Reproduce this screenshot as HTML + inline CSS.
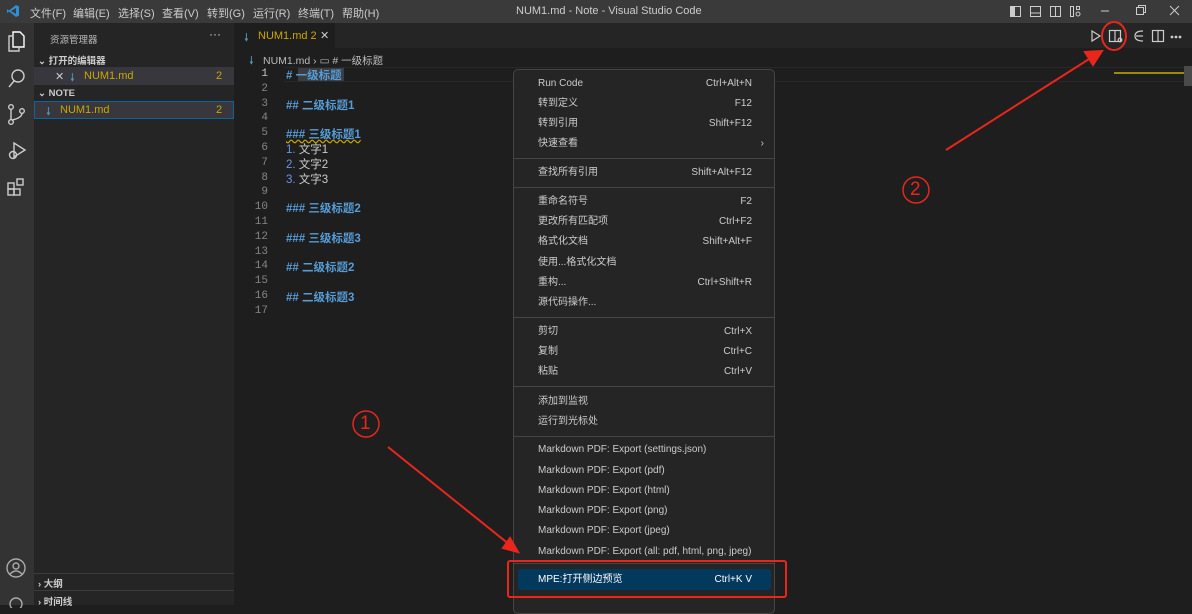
<!DOCTYPE html>
<html><head><meta charset="utf-8"><style>
*{margin:0;padding:0;box-sizing:border-box}
body{width:1192px;height:605px;overflow:hidden;background:#1e1e1e;font-family:"Liberation Sans","Noto Sans CJK SC",sans-serif;font-size:11px;color:#ccc;position:relative}
.a{position:absolute;white-space:nowrap}
#title{left:0;top:0;width:1192px;height:23px;background:#3a3a3a}
#title span.m{position:absolute;top:5px;font-size:11px;color:#ccc}
#act{left:0;top:23px;width:34px;height:582px;background:#333}
#side{left:34px;top:23px;width:200px;height:582px;background:#252526}
#tabs{left:234px;top:23px;width:958px;height:25px;background:#252526}
.ln{position:absolute;left:234px;width:34px;text-align:right;color:#858585;font-family:"Liberation Mono",monospace;font-size:11px}
.code{position:absolute;left:286px;color:#569cd6;font-weight:bold;font-size:11.5px;white-space:nowrap}
#menu{left:513px;top:69px;width:262px;height:545px;background:#252526;border:1px solid #454545;border-radius:5px}
.mi{position:absolute;left:538px;width:214px;font-size:10px;line-height:14px;height:14px;color:#ccc;white-space:nowrap}
.mi i{font-style:normal;position:absolute;right:0;top:0;line-height:14px}
.sep{position:absolute;left:514px;width:260px;height:1px;background:#454545}
</style></head><body>
<div id="title" class="a">
<svg class="a" style="left:6px;top:4px" width="14" height="14" viewBox="0 0 14 14"><path d="M10 1 L13 2.5 V11.5 L10 13 L3 7.5 L1 9 V5 L3 6.5 Z" fill="#2d8fd5"/><path d="M10 4 V10 L5 7 Z" fill="#3a3a3a"/></svg>
<span class="m" style="left:30px">文件(F)</span><span class="m" style="left:73px">编辑(E)</span><span class="m" style="left:118px">选择(S)</span><span class="m" style="left:162px">查看(V)</span><span class="m" style="left:207px">转到(G)</span><span class="m" style="left:253px">运行(R)</span><span class="m" style="left:298px">终端(T)</span><span class="m" style="left:342px">帮助(H)</span>
<span class="m" style="left:516px">NUM1.md - Note - Visual Studio Code</span>
<svg class="a" style="left:1009px;top:5px" width="80" height="13" viewBox="0 0 80 13" fill="none" stroke="#ccc"><rect x="1.5" y="1.5" width="10" height="10"/><rect x="1.5" y="1.5" width="4" height="10" fill="#ccc"/><rect x="21.5" y="1.5" width="10" height="10"/><line x1="21.5" y1="8" x2="31.5" y2="8"/><rect x="41.5" y="1.5" width="10" height="10"/><line x1="46.5" y1="1.5" x2="46.5" y2="11.5"/><rect x="61.5" y="1.5" width="3" height="10"/><rect x="67.5" y="1.5" width="3" height="3"/><circle cx="69" cy="9" r="2"/></svg>
<svg class="a" style="left:1100px;top:4px" width="90" height="14" fill="none" stroke="#ccc"><line x1="1" y1="7" x2="9" y2="7"/><rect x="36.5" y="3.5" width="7" height="7"/><path d="M38.5 3.5V1.5H45.5V8.5H43.5"/><path d="M70 2L79 11M79 2L70 11"/></svg>
</div>
<div id="act" class="a">
<svg class="a" style="left:6px;top:8px" width="22" height="180" fill="none" stroke="#ccc" stroke-width="1.4"><path d="M6 5H3V20H13V17"/><path d="M7 1H14L18 5V16H7Z" stroke="#fff"/><circle cx="12" cy="45" r="6"/><line x1="8" y1="50" x2="3" y2="56"/><circle cx="5" cy="76" r="2.3"/><circle cx="5" cy="91" r="2.3"/><circle cx="16" cy="80" r="2.3"/><path d="M5 78V89M16 82Q16 87 6 89"/><path d="M8 112L19 119L8 126Z"/><circle cx="7" cy="124" r="3.5"/><rect x="2" y="152" width="6" height="6"/><rect x="2" y="158" width="6" height="6"/><rect x="8" y="158" width="6" height="6"/><rect x="11" y="148" width="6" height="6"/></svg>
<svg class="a" style="left:5px;top:535px" width="24" height="50" fill="none" stroke="#aaa" stroke-width="1.4"><circle cx="11" cy="10" r="9"/><circle cx="11" cy="8" r="3"/><path d="M5 16Q11 10 17 16"/><circle cx="11" cy="46" r="6"/></svg>
</div>
<div id="side" class="a">
<span class="a" style="left:16px;top:9px;font-size:9.5px;color:#bbb">资源管理器</span>
<span class="a" style="left:175px;top:4px;font-size:12px;color:#ccc">···</span>
<span class="a" style="left:4px;top:30px;font-size:9.5px;font-weight:bold;color:#ccc">⌄ 打开的编辑器</span>
<div class="a" style="left:0;top:44px;width:200px;height:18px;background:#37373d"></div>
<span class="a" style="left:21px;top:47px;color:#ccc">✕</span>
<span class="a" style="left:36px;top:46px;color:#519aba">🠗</span>
<span class="a" style="left:50px;top:47px;color:#cca700">NUM1.md</span>
<span class="a" style="left:182px;top:47px;color:#cca700">2</span>
<span class="a" style="left:4px;top:65px;font-size:9.5px;font-weight:bold;color:#ccc">⌄ NOTE</span>
<div class="a" style="left:0;top:78px;width:200px;height:18px;background:#37373d;border:1px solid #0e639c"></div>
<span class="a" style="left:12px;top:80px;color:#519aba">🠗</span>
<span class="a" style="left:26px;top:81px;color:#cca700">NUM1.md</span>
<span class="a" style="left:182px;top:81px;color:#cca700">2</span>
<div class="a" style="left:0;top:550px;width:200px;height:1px;background:#3c3c3c"></div>
<span class="a" style="left:4px;top:553px;font-size:9.5px;font-weight:bold;color:#ccc">› 大纲</span>
<div class="a" style="left:0;top:567px;width:200px;height:1px;background:#3c3c3c"></div>
<span class="a" style="left:4px;top:571px;font-size:9.5px;font-weight:bold;color:#ccc">› 时间线</span>
</div>
<div id="tabs" class="a">
<div class="a" style="left:0;top:0;width:101px;height:25px;background:#1e1e1e"></div>
<span class="a" style="left:10px;top:6px;color:#519aba">🠗</span>
<span class="a" style="left:24px;top:7px;color:#cca700">NUM1.md 2</span>
<span class="a" style="left:86px;top:6px;color:#ccc">✕</span>
<svg class="a" style="left:856px;top:6px" width="100" height="14" fill="none" stroke="#ccc" stroke-width="1.2"><path d="M2 2L10 7L2 12Z"/><rect x="19.5" y="1.5" width="11" height="11"/><line x1="25" y1="1.5" x2="25" y2="12.5"/><circle cx="30" cy="11" r="1.8"/><path d="M46 7H53M53 2Q45 2 45 7Q45 12 53 12"/><rect x="62.5" y="1.5" width="11" height="11"/><line x1="68" y1="1.5" x2="68" y2="12.5"/><circle cx="82" cy="8" r=".8" fill="#ccc"/><circle cx="86" cy="8" r=".8" fill="#ccc"/><circle cx="90" cy="8" r=".8" fill="#ccc"/></svg>
</div>
<span class="a" style="left:249px;top:52px;color:#519aba">🠗</span>
<span class="a" style="left:263px;top:53px;color:#bbb;font-size:10.5px">NUM1.md › ▭ # 一级标题</span>
<div class="a" style="left:284px;top:67px;width:908px;height:15px;border-top:1px solid #282828;border-bottom:1px solid #282828"></div>
<div class="a" style="left:298px;top:68px;width:46px;height:13px;background:#3a3d41"></div>
<div class="a" style="left:1114px;top:72px;width:70px;height:2px;background:#a08a00"></div>
<div class="a" style="left:1184px;top:66px;width:8px;height:20px;background:#4a4a4a"></div>
<div class="ln" style="top:68px;color:#c6c6c6">1</div><div class="ln" style="top:83px">2</div><div class="ln" style="top:98px">3</div><div class="ln" style="top:112px">4</div><div class="ln" style="top:127px">5</div><div class="ln" style="top:142px">6</div><div class="ln" style="top:157px">7</div><div class="ln" style="top:172px">8</div><div class="ln" style="top:186px">9</div><div class="ln" style="top:201px">10</div><div class="ln" style="top:216px">11</div><div class="ln" style="top:231px">12</div><div class="ln" style="top:246px">13</div><div class="ln" style="top:260px">14</div><div class="ln" style="top:275px">15</div><div class="ln" style="top:290px">16</div><div class="ln" style="top:305px">17</div>
<div class="code" style="top:67px"># 一级标题</div>
<div class="code" style="top:97px">## 二级标题1</div>
<div class="code" style="top:126px;text-decoration:underline wavy #cca700">### 三级标题1</div>
<div class="code" style="top:141px;font-weight:normal"><span style="color:#6796e6">1.</span> <span style="color:#ccc">文字1</span></div>
<div class="code" style="top:156px;font-weight:normal"><span style="color:#6796e6">2.</span> <span style="color:#ccc">文字2</span></div>
<div class="code" style="top:171px;font-weight:normal"><span style="color:#6796e6">3.</span> <span style="color:#ccc">文字3</span></div>
<div class="code" style="top:200px">### 三级标题2</div>
<div class="code" style="top:230px">### 三级标题3</div>
<div class="code" style="top:259px">## 二级标题2</div>
<div class="code" style="top:289px">## 二级标题3</div>
<div id="menu" class="a"></div>
<div class="mi" style="top:77px">Run Code<i>Ctrl+Alt+N</i></div>
<div class="mi" style="top:97px">转到定义<i>F12</i></div>
<div class="mi" style="top:117px">转到引用<i>Shift+F12</i></div>
<div class="mi" style="top:137px">快速查看<i style="right:-12px">›</i></div>
<div class="sep" style="top:158px"></div>
<div class="mi" style="top:166px">查找所有引用<i>Shift+Alt+F12</i></div>
<div class="sep" style="top:187px"></div>
<div class="mi" style="top:195px">重命名符号<i>F2</i></div>
<div class="mi" style="top:215px">更改所有匹配项<i>Ctrl+F2</i></div>
<div class="mi" style="top:235px">格式化文档<i>Shift+Alt+F</i></div>
<div class="mi" style="top:256px">使用...格式化文档</div>
<div class="mi" style="top:276px">重构...<i>Ctrl+Shift+R</i></div>
<div class="mi" style="top:296px">源代码操作...</div>
<div class="sep" style="top:317px"></div>
<div class="mi" style="top:325px">剪切<i>Ctrl+X</i></div>
<div class="mi" style="top:345px">复制<i>Ctrl+C</i></div>
<div class="mi" style="top:365px">粘贴<i>Ctrl+V</i></div>
<div class="sep" style="top:386px"></div>
<div class="mi" style="top:395px">添加到监视</div>
<div class="mi" style="top:415px">运行到光标处</div>
<div class="sep" style="top:436px"></div>
<div class="mi" style="top:443px">Markdown PDF: Export (settings.json)</div>
<div class="mi" style="top:464px">Markdown PDF: Export (pdf)</div>
<div class="mi" style="top:484px">Markdown PDF: Export (html)</div>
<div class="mi" style="top:504px">Markdown PDF: Export (png)</div>
<div class="mi" style="top:524px">Markdown PDF: Export (jpeg)</div>
<div class="mi" style="top:545px">Markdown PDF: Export (all: pdf, html, png, jpeg)</div>
<div class="sep" style="top:563px"></div>
<div class="a" style="left:518px;top:569px;width:253px;height:21px;background:#04395e;border-radius:3px"></div>
<div class="mi" style="top:573px;color:#fff">MPE:打开侧边预览<i>Ctrl+K V</i></div>
<svg class="a" style="left:0;top:0" width="1192" height="605" fill="none" stroke="#e8261c" stroke-width="2">
<rect x="508" y="561" width="278" height="36" rx="2"/>
<ellipse cx="1114" cy="36" rx="12" ry="14"/>
<line x1="388" y1="447" x2="515" y2="549"/><path d="M503 548L518 552L510 538Z" fill="#e8261c"/>
<line x1="946" y1="150" x2="1097" y2="54"/><path d="M1085 52L1102 51L1093 65Z" fill="#e8261c"/>
<circle cx="366" cy="424" r="13" stroke-width="1.5"/><circle cx="916" cy="190" r="13" stroke-width="1.5"/>
</svg>
<span class="a" style="left:360px;top:413px;color:#e8261c;font-size:19px">1</span>
<span class="a" style="left:910px;top:179px;color:#e8261c;font-size:19px">2</span>
</body></html>
